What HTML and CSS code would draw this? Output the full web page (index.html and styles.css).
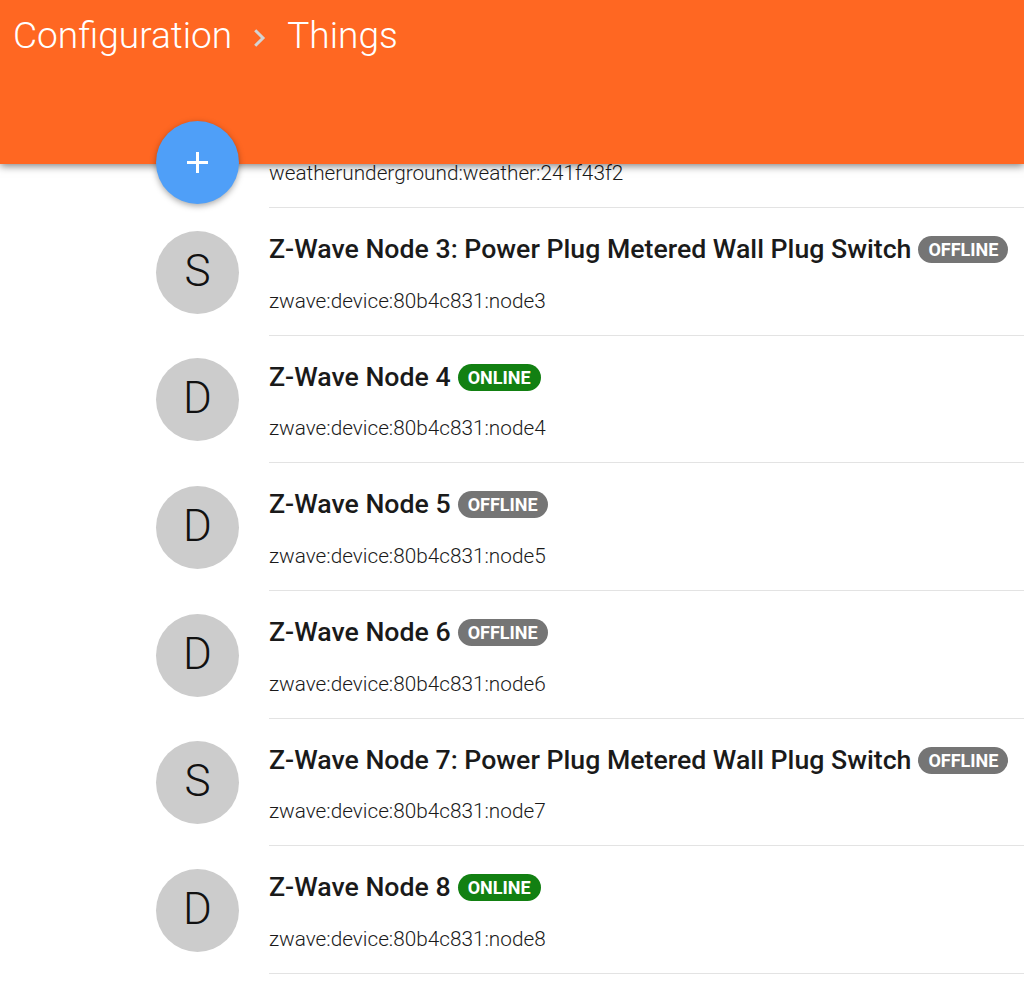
FILE: index.html
```html
<!DOCTYPE html>
<html lang="en">
<head>
    <meta charset="UTF-8">
    <meta name="viewport" content="width=device-width, initial-scale=1.0">
    <title>Things</title>
    <link rel="stylesheet" href="styles.css">
</head>
<body>
    <header class="header">
        <nav class="breadcrumb">
            <span>Configuration</span>
            <svg class="chevron" viewBox="0 0 12 18"><path d="M1.2 1.2 L9 9 L1.2 16.8" /></svg>
            <span>Things</span>
        </nav>
        <button class="fab" aria-label="Add">
            <svg viewBox="0 0 21 21"><path d="M10.5 0 V21 M0 10.5 H21" /></svg>
        </button>
    </header>

    <main class="things">
        <div class="thing partial">
            <div class="info">
                <p class="uid">weatherunderground:weather:241f43f2</p>
            </div>
        </div>
        <div class="thing">
            <div class="avatar">S</div>
            <div class="info">
                <h3><span class="name">Z-Wave Node 3: Power Plug Metered Wall Plug Switch</span><span class="badge offline">OFFLINE</span></h3>
                <p class="uid">zwave:device:80b4c831:node3</p>
            </div>
        </div>
        <div class="thing">
            <div class="avatar">D</div>
            <div class="info">
                <h3><span class="name">Z-Wave Node 4</span><span class="badge online">ONLINE</span></h3>
                <p class="uid">zwave:device:80b4c831:node4</p>
            </div>
        </div>
        <div class="thing">
            <div class="avatar">D</div>
            <div class="info">
                <h3><span class="name">Z-Wave Node 5</span><span class="badge offline">OFFLINE</span></h3>
                <p class="uid">zwave:device:80b4c831:node5</p>
            </div>
        </div>
        <div class="thing">
            <div class="avatar">D</div>
            <div class="info">
                <h3><span class="name">Z-Wave Node 6</span><span class="badge offline">OFFLINE</span></h3>
                <p class="uid">zwave:device:80b4c831:node6</p>
            </div>
        </div>
        <div class="thing">
            <div class="avatar">S</div>
            <div class="info">
                <h3><span class="name">Z-Wave Node 7: Power Plug Metered Wall Plug Switch</span><span class="badge offline">OFFLINE</span></h3>
                <p class="uid">zwave:device:80b4c831:node7</p>
            </div>
        </div>
        <div class="thing">
            <div class="avatar">D</div>
            <div class="info">
                <h3><span class="name">Z-Wave Node 8</span><span class="badge online">ONLINE</span></h3>
                <p class="uid">zwave:device:80b4c831:node8</p>
            </div>
        </div>
    </main>
</body>
</html>
```
FILE: styles.css
```css
* {
    box-sizing: border-box;
}
body {
    margin: 0;
    height: 989px;
    overflow: hidden;
    background-color: #fff;
    color: #1a1a1a;
    font-family: Roboto, sans-serif;
}
.header {
    position: relative;
    z-index: 2;
    height: 164px;
    background-color: #ff6722;
    box-shadow: 0 2px 8px rgba(0,0,0,0.5);
}
.breadcrumb {
    display: flex;
    align-items: center;
    height: 70px;
    padding-left: 13px;
    color: #fff;
    font-size: 37.1px;
    font-weight: 300;
}
.chevron {
    width: 12px;
    height: 18px;
    margin: 5px 21px 0 22px;
    fill: none;
    stroke: #d3d3d3;
    stroke-width: 3;
}
/* floating button, hangs over the lower edge of the header */
.fab {
    position: absolute;
    left: 156px;
    top: 121px;
    display: flex;
    align-items: center;
    justify-content: center;
    width: 83px;
    height: 83px;
    padding: 0;
    border: none;
    border-radius: 50%;
    background-color: #4f9ff8;
    box-shadow: 0 2px 6px rgba(0,0,0,0.35);
}
.fab svg {
    width: 21px;
    height: 21px;
    fill: none;
    stroke: #fff;
    stroke-width: 3;
}
.thing {
    display: flex;
    height: 127.65px;
    padding-left: 156px;
}
.thing.partial {
    height: 44px;
    padding-left: 269px;
}
.avatar {
    flex: none;
    width: 83px;
    height: 83px;
    margin: 22.8px 30px 0 0;
    border-radius: 50%;
    background-color: #ccc;
    color: #111;
    font-size: 44px;
    font-weight: 300;
    line-height: 80px;
    text-align: center;
}
.info {
    flex: 1;
    border-bottom: 1.5px solid #e3e3e3;
}
h3 {
    display: flex;
    align-items: center;
    margin: 28.2px 0 0;
    height: 27px;
    font-size: 26.7px;
    font-weight: 500;
    white-space: nowrap;
}
.name {
    height: 27px;
    line-height: 27px;
    overflow: hidden;
}
.badge {
    height: 27px;
    margin-left: 7px;
    padding: 0 10px;
    border-radius: 14px;
    color: #fff;
    font-size: 18px;
    font-weight: 700;
    line-height: 27px;
}
.online {
    background-color: #128012;
}
.offline {
    background-color: #757575;
}
.uid {
    margin: 24.4px 0 0;
    font-size: 20.75px;
    font-weight: 300;
    line-height: 26px;
}
.partial .uid {
    margin-top: -4px;
}
```
